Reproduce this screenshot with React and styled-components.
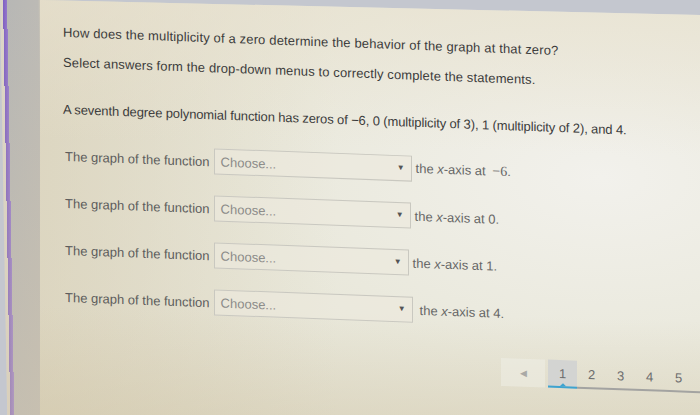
import React from 'react';
import styled, { createGlobalStyle } from 'styled-components';

const GlobalStyle = createGlobalStyle`
  html, body {
    margin: 0;
    padding: 0;
    background: #c4c7cf;
    overflow: hidden;
  }
  body {
    font-family: 'Liberation Sans', Arial, sans-serif;
  }
`;

const Page = styled.div`
  display: flex;
  width: 700px;
  height: 415px;
  overflow: hidden;
  background: #c4c7cf;
`;

const SideStrip = styled.div`
  flex: 0 0 40px;
  height: 440px;
  transform-origin: 0 0;
  transform: skewX(1deg);
  background:
    linear-gradient(to bottom, rgba(255, 255, 255, 0), rgba(215, 200, 170, 0.45)),
    linear-gradient(
      to right,
      #dcd6c8 0,
      #dcd6c8 3px,
      #7f60c2 3px,
      #9478cc 7px,
      #b7b7b5 7px,
      #bcbab5 38px,
      #cbc6b8 40px
    );
`;

const Main = styled.div`
  flex: 1;
  height: 470px;
  transform-origin: 0 0;
  transform: skewY(1.3deg);
  background:
    linear-gradient(to bottom, rgba(233, 226, 208, 0.6), rgba(233, 226, 208, 0) 30%),
    linear-gradient(to top, rgba(205, 192, 160, 0.55), rgba(205, 192, 160, 0) 35%),
    linear-gradient(to right, rgba(214, 204, 178, 0.55), rgba(214, 204, 178, 0) 45%),
    radial-gradient(ellipse at 85% 35%, #f2f1ec 0%, #e9e8db 45%, #e0ddcb 100%);
`;

const Content = styled.div`
  display: flex;
  flex-direction: column;
  padding: 24px 0 0 23px;
  transform-origin: 0 0;
  transform: skewY(0.8deg);
`;

const Question = styled.p`
  margin: ${(p) => p.$top || 0}px 0 0;
  font-size: 13px;
  line-height: 16px;
  letter-spacing: ${(p) => p.$track || 0}px;
  color: #3b3b3b;
  white-space: nowrap;
`;

const Rows = styled.div`
  display: flex;
  flex-direction: column;
  gap: 21px;
  margin-top: 25px;
`;

const Row = styled.div`
  display: flex;
  align-items: center;
  height: 26px;
  font-size: 13px;
  color: #5c5c5c;
  white-space: nowrap;
`;

const Label = styled.span`
  margin-left: 2px;
  margin-right: 4px;
`;

const Select = styled.div`
  box-sizing: border-box;
  display: flex;
  align-items: center;
  justify-content: space-between;
  width: ${(p) => p.$w}px;
  height: 26px;
  padding: 0 6px;
  border: 1px solid #c9c8c0;
  background: rgba(236, 234, 222, 0.6);
  color: #8a8a88;
  font-size: 13px;
`;

const Caret = styled.span`
  font-size: 8px;
  color: #555;
  margin-top: -2px;
`;

const After = styled.span`
  margin-left: ${(p) => p.$gap}px;
  color: #666;
`;

const Var = styled.i`
  font-family: 'Liberation Sans', Arial, sans-serif;
`;

const Num = styled.span`
  font-family: 'Liberation Serif', 'Times New Roman', serif;
  font-size: 14px;
  margin-left: 3px;
`;

const Pager = styled.nav`
  display: flex;
  align-self: flex-end;
  align-items: stretch;
  margin-top: 32px;
  height: 28px;
`;

const ArrowCell = styled.div`
  display: flex;
  align-items: center;
  justify-content: center;
  width: 44px;
  margin-right: 3px;
  color: #a9a9a6;
  font-size: 9px;
  background: rgba(240, 239, 232, 0.5);
`;

const PageCell = styled.div`
  display: flex;
  align-items: center;
  justify-content: center;
  width: 29px;
  position: relative;
  font-size: 13px;
  color: #6d6d6d;
  background: ${(p) => (p.$active ? '#d3d4d2' : 'transparent')};
  border-bottom: 2px solid ${(p) => (p.$active ? '#3ea3cf' : '#a3a3a1')};
  ${(p) =>
    p.$active
      ? `
    &::after {
      content: '';
      position: absolute;
      bottom: 0;
      left: 50%;
      margin-left: -3px;
      border-left: 3px solid transparent;
      border-right: 3px solid transparent;
      border-bottom: 3px solid #3ea3cf;
    }
  `
      : null}
`;

const Tail = styled.div`
  width: 7px;
  border-bottom: 2px solid #a3a3a1;
`;

const rows = [
  { w: 198, gap: 4, at: <Num>−6</Num> },
  { w: 197, gap: 4, at: '0' },
  { w: 195, gap: 4, at: '1' },
  { w: 199, gap: 7, at: '4' },
];

export default function App() {
  return (
    <>
      <GlobalStyle />
      <Page>
        <SideStrip />
        <Main>
          <Content>
            <Question $track={0.15}>
              How does the multiplicity of a zero determine the behavior of the graph at that zero?
            </Question>
            <Question $top={14} $track={0.12}>
              Select answers form the drop-down menus to correctly complete the statements.
            </Question>
            <Question $top={31} $track={-0.12}>
              A seventh degree polynomial function has zeros of −6, 0 (multiplicity of 3), 1
              (multiplicity of 2), and 4.
            </Question>

            <Rows>
              {rows.map((r, i) => (
                <Row key={i}>
                  <Label>The graph of the function</Label>
                  <Select $w={r.w}>
                    <span>Choose...</span>
                    <Caret>▼</Caret>
                  </Select>
                  <After $gap={r.gap}>
                    the <Var>x</Var>-axis at {r.at}.
                  </After>
                </Row>
              ))}
            </Rows>

            <Pager>
              <ArrowCell>◀</ArrowCell>
              {[1, 2, 3, 4, 5].map((n) => (
                <PageCell key={n} $active={n === 1}>
                  {n}
                </PageCell>
              ))}
              <Tail />
            </Pager>
          </Content>
        </Main>
      </Page>
    </>
  );
}
